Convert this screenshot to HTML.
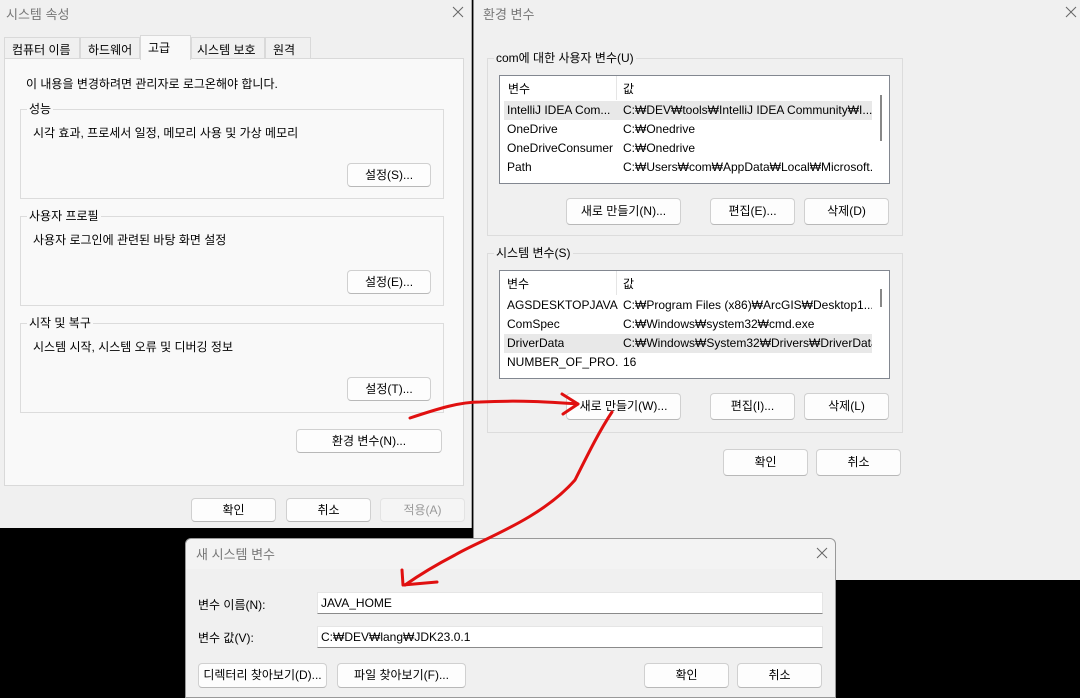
<!DOCTYPE html>
<html><head><meta charset="utf-8"><style>
*{box-sizing:border-box;margin:0;padding:0}
body{width:1080px;height:698px;background:#000;position:relative;overflow:hidden;font-family:"Liberation Sans","Noto Sans CJK KR",sans-serif;font-size:12px;color:#000}
.a{position:absolute;white-space:nowrap}
.win{position:absolute;background:#f0f0f0}
.btn{position:absolute;background:#fdfdfd;border:1px solid #d0d0d0;border-bottom-color:#b8b8b8;border-radius:4px;text-align:center;font-size:12px;white-space:nowrap}
.grp{position:absolute;border:1px solid #dcdcdc}
.gl{position:absolute;padding:0 2px;font-size:12px;line-height:16px}
.list{position:absolute;background:#fff;border:1px solid #828790}
.row{position:absolute;left:0;height:19px;line-height:19px;width:372px}
.row span{position:absolute;white-space:nowrap;overflow:hidden}
.inp{position:absolute;background:#fff;border:1px solid #e5e5e5;border-bottom:1px solid #8a8a8a;padding-left:3px;line-height:20px;white-space:nowrap}
svg.x{position:absolute}
</style></head><body>

<!-- left window -->
<div class="win" style="left:0;top:0;width:472px;height:528px;background:#f0f0f0;border-right:1px solid #aaa">
 <div class="a" style="left:6px;top:4px;color:#777;font-size:13px">시스템 속성</div>
 <svg class="x" style="left:452px;top:6px" width="12" height="12"><path d="M1 1L11 11M11 1L1 11" stroke="#666" stroke-width="1"/></svg>
 <div class="a" style="left:4px;top:37px;width:76px;height:22px;border:1px solid #d9d9d9;background:#f0f0f0;padding:3px 0 0 7px">컴퓨터 이름</div>
 <div class="a" style="left:80px;top:37px;width:60px;height:22px;border:1px solid #d9d9d9;background:#f0f0f0;padding:3px 0 0 7px">하드웨어</div>
 <div class="a" style="left:140px;top:35px;width:51px;height:25px;border:1px solid #d9d9d9;border-bottom:none;background:#f9f9f9;padding:3px 0 0 7px;z-index:2">고급</div>
 <div class="a" style="left:191px;top:37px;width:74px;height:22px;border:1px solid #d9d9d9;background:#f0f0f0;padding:3px 0 0 5px">시스템 보호</div>
 <div class="a" style="left:265px;top:37px;width:46px;height:22px;border:1px solid #d9d9d9;background:#f0f0f0;padding:3px 0 0 7px">원격</div>
 <div class="a" style="left:4px;top:58px;width:460px;height:428px;background:#f9f9f9;border:1px solid #d9d9d9">
  <div class="a" style="left:21px;top:16px">이 내용을 변경하려면 관리자로 로그온해야 합니다.</div>
  <div class="grp" style="left:15px;top:50px;width:424px;height:90px"></div>
  <div class="gl a" style="left:22px;top:42px;background:#f9f9f9">성능</div>
  <div class="a" style="left:28px;top:65px">시각 효과, 프로세서 일정, 메모리 사용 및 가상 메모리</div>
  <div class="btn" style="left:342px;top:104px;width:84px;height:24px;line-height:22px">설정(S)...</div>
  <div class="grp" style="left:15px;top:157px;width:424px;height:90px"></div>
  <div class="gl a" style="left:22px;top:149px;background:#f9f9f9">사용자 프로필</div>
  <div class="a" style="left:28px;top:172px">사용자 로그인에 관련된 바탕 화면 설정</div>
  <div class="btn" style="left:342px;top:211px;width:84px;height:24px;line-height:22px">설정(E)...</div>
  <div class="grp" style="left:15px;top:264px;width:424px;height:90px"></div>
  <div class="gl a" style="left:22px;top:256px;background:#f9f9f9">시작 및 복구</div>
  <div class="a" style="left:28px;top:279px">시스템 시작, 시스템 오류 및 디버깅 정보</div>
  <div class="btn" style="left:342px;top:318px;width:84px;height:24px;line-height:22px">설정(T)...</div>
  <div class="btn" style="left:291px;top:370px;width:146px;height:24px;line-height:22px">환경 변수(N)...</div>
 </div>
 <div class="btn" style="left:191px;top:498px;width:85px;height:24px;line-height:22px">확인</div>
 <div class="btn" style="left:286px;top:498px;width:85px;height:24px;line-height:22px">취소</div>
 <div class="btn" style="left:380px;top:498px;width:85px;height:24px;line-height:22px;color:#999;background:#f5f5f5;border-color:#e3e3e3">적용(A)</div>
</div>

<!-- right window -->
<div class="win" style="left:473px;top:0;width:607px;height:580px;background:#f0f0f0;border-left:1px solid #888">
 <div class="a" style="left:9px;top:4px;color:#777;font-size:13px">환경 변수</div>
 <svg class="x" style="left:591px;top:6px" width="12" height="12"><path d="M1 1L11 11M11 1L1 11" stroke="#666" stroke-width="1"/></svg>
 <div class="grp" style="left:13px;top:58px;width:416px;height:178px"></div>
 <div class="gl a" style="left:20px;top:50px;background:#f0f0f0">com에 대한 사용자 변수(U)</div>
 <div class="list" style="left:25px;top:75px;width:391px;height:109px;overflow:hidden">
  <div class="row" style="top:2px;height:22px;line-height:22px"><span style="left:8px">변수</span><span style="left:123px">값</span></div>
  <div class="a" style="left:116px;top:0;width:1px;height:24px;background:#e5e5e5"></div>
  <div class="row" style="top:25px;background:#e8e8e8;width:368px;left:4px"><span style="left:3px;width:112px">IntelliJ IDEA Com...</span><span style="left:119px;width:249px">C:₩DEV₩tools₩IntelliJ IDEA Community₩I...</span></div>
  <div class="row" style="top:44px"><span style="left:7px">OneDrive</span><span style="left:123px">C:₩Onedrive</span></div>
  <div class="row" style="top:63px"><span style="left:7px">OneDriveConsumer</span><span style="left:123px">C:₩Onedrive</span></div>
  <div class="row" style="top:82px"><span style="left:7px">Path</span><span style="left:123px;width:249px">C:₩Users₩com₩AppData₩Local₩Microsoft...</span></div>
  <div class="a" style="left:373px;top:0;width:17px;height:109px;background:#fff"></div>
  <div class="a" style="left:380px;top:19px;width:2px;height:46px;background:#888"></div>
 </div>
 <div class="btn" style="left:92px;top:198px;width:115px;height:27px;line-height:25px">새로 만들기(N)...</div>
 <div class="btn" style="left:236px;top:198px;width:85px;height:27px;line-height:25px">편집(E)...</div>
 <div class="btn" style="left:330px;top:198px;width:85px;height:27px;line-height:25px">삭제(D)</div>

 <div class="grp" style="left:13px;top:253px;width:416px;height:180px"></div>
 <div class="gl a" style="left:20px;top:245px;background:#f0f0f0">시스템 변수(S)</div>
 <div class="list" style="left:25px;top:270px;width:391px;height:109px;overflow:hidden">
  <div class="row" style="top:2px;height:22px;line-height:22px"><span style="left:7px">변수</span><span style="left:123px">값</span></div>
  <div class="a" style="left:116px;top:0;width:1px;height:24px;background:#e5e5e5"></div>
  <div class="row" style="top:25px"><span style="left:7px;width:112px">AGSDESKTOPJAVA</span><span style="left:123px;width:249px">C:₩Program Files (x86)₩ArcGIS₩Desktop1...</span></div>
  <div class="row" style="top:44px"><span style="left:7px">ComSpec</span><span style="left:123px">C:₩Windows₩system32₩cmd.exe</span></div>
  <div class="row" style="top:63px;background:#e8e8e8;left:4px;width:368px"><span style="left:3px">DriverData</span><span style="left:119px;width:249px">C:₩Windows₩System32₩Drivers₩DriverData</span></div>
  <div class="row" style="top:82px"><span style="left:7px;width:112px">NUMBER_OF_PRO...</span><span style="left:123px">16</span></div>
  <div class="a" style="left:373px;top:0;width:17px;height:109px;background:#fff"></div>
  <div class="a" style="left:380px;top:18px;width:2px;height:18px;background:#888"></div>
 </div>
 <div class="btn" style="left:92px;top:393px;width:115px;height:27px;line-height:25px">새로 만들기(W)...</div>
 <div class="btn" style="left:236px;top:393px;width:85px;height:27px;line-height:25px">편집(I)...</div>
 <div class="btn" style="left:330px;top:393px;width:85px;height:27px;line-height:25px">삭제(L)</div>
 <div class="btn" style="left:249px;top:449px;width:85px;height:27px;line-height:25px">확인</div>
 <div class="btn" style="left:342px;top:449px;width:85px;height:27px;line-height:25px">취소</div>
</div>

<!-- bottom dialog -->
<div class="win" style="left:185px;top:538px;width:651px;height:160px;background:#f0f0f0;border:1px solid #999;border-radius:6px 6px 0 0">
 <div class="a" style="left:0;top:0;width:649px;height:30px;background:#f3f3f3;border-radius:6px 6px 0 0"></div>
 <div class="a" style="left:10px;top:5px;color:#777;font-size:13px">새 시스템 변수</div>
 <svg class="x" style="left:630px;top:8px" width="12" height="12"><path d="M1 1L11 11M11 1L1 11" stroke="#666" stroke-width="1"/></svg>
 <div class="a" style="left:12px;top:57px">변수 이름(N):</div>
 <div class="inp" style="left:131px;top:53px;width:506px;height:22px">JAVA_HOME</div>
 <div class="a" style="left:12px;top:90px">변수 값(V):</div>
 <div class="inp" style="left:131px;top:87px;width:506px;height:22px">C:₩DEV₩lang₩JDK23.0.1</div>
 <div class="btn" style="left:12px;top:124px;width:129px;height:25px;line-height:23px">디렉터리 찾아보기(D)...</div>
 <div class="btn" style="left:151px;top:124px;width:129px;height:25px;line-height:23px">파일 찾아보기(F)...</div>
 <div class="btn" style="left:458px;top:124px;width:85px;height:25px;line-height:23px">확인</div>
 <div class="btn" style="left:551px;top:124px;width:85px;height:25px;line-height:23px">취소</div>
</div>

<!-- red arrows -->
<svg class="a" style="left:0;top:0" width="1080" height="698">
 <g fill="none" stroke="#e01010" stroke-width="3" stroke-linecap="round" stroke-linejoin="round">
  <path d="M410 418 C440 408,460 402,480 402 C520 400,550 402,578 404"/>
  <path d="M562 394 L578 404 L563 414"/>
  <path d="M612 412 C600 430,590 450,575 480 C540 520,480 540,455 555 C430 568,415 578,405 585"/>
  <path d="M402 570 L403 585 L437 582"/>
 </g>
</svg>
</body></html>
